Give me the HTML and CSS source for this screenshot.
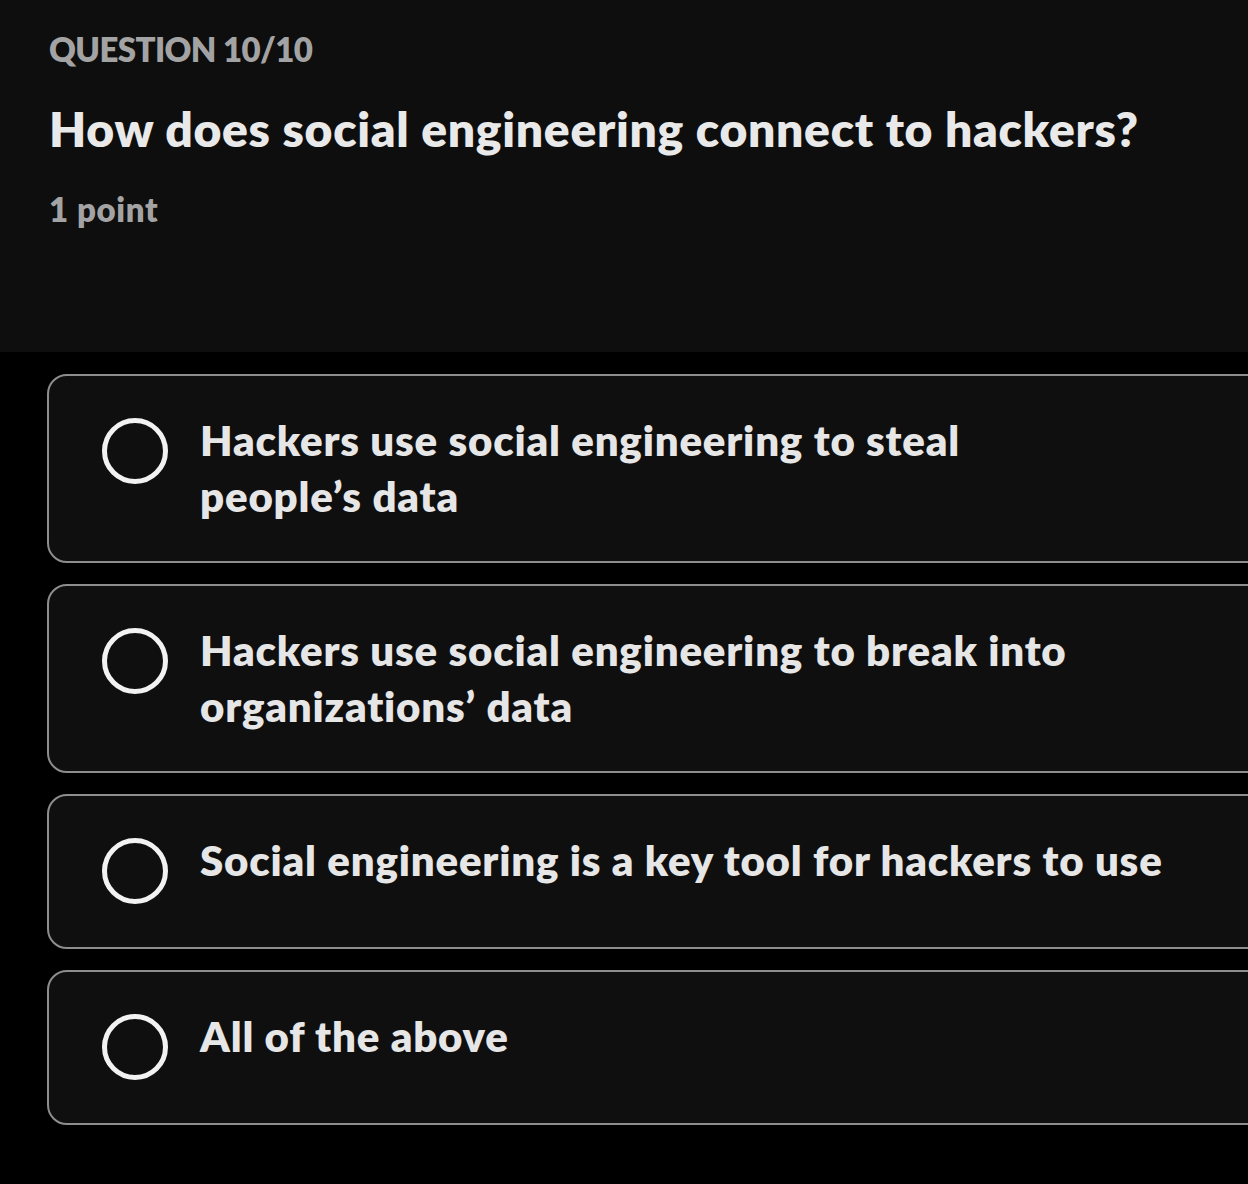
FILE: index.html
```html
<!DOCTYPE html>
<html lang="en">
<head>
<meta charset="utf-8">
<title>Question 10/10</title>
<link rel="stylesheet" href="styles.css">
</head>
<body>
<header class="question-head">
  <div class="q-label">QUESTION 10/10</div>
  <h1 class="q-title">How does social engineering connect to hackers?</h1>
  <div class="q-points">1 point</div>
</header>
<main class="options">
  <div class="option">
    <span class="radio"></span>
    <span class="option-text">Hackers use social engineering to steal<br>people’s data</span>
  </div>
  <div class="option">
    <span class="radio"></span>
    <span class="option-text">Hackers use social engineering to break into<br>organizations’ data</span>
  </div>
  <div class="option">
    <span class="radio"></span>
    <span class="option-text">Social engineering is a key tool for hackers to use</span>
  </div>
  <div class="option">
    <span class="radio"></span>
    <span class="option-text">All of the above</span>
  </div>
</main>
</body>
</html>
```

FILE: styles.css
```css
html, body {
  margin: 0;
  padding: 0;
  background: #000;
  overflow: hidden;
}
body {
  font-family: Lato, "Noto Sans", sans-serif;
  font-weight: 800;
  font-variant-ligatures: none;
  color: #e6e6e6;
}
.question-head {
  background: #0e0e0e;
  height: 352px;
  box-sizing: border-box;
  padding: 29px 0 0 49px;
}
.q-label {
  font-size: 33px;
  line-height: 40px;
  letter-spacing: -0.6px;
  color: #a3a3a3;
}
.q-title {
  margin: 32px 0 0 0;
  font-size: 48px;
  line-height: 56px;
  letter-spacing: 0.7px;
  font-weight: 800;
  color: #e9e9e9;
}
.q-points {
  margin-top: 34px;
  font-size: 33px;
  line-height: 36px;
  letter-spacing: 0.6px;
  color: #a3a3a3;
}
.options {
  display: flex;
  flex-direction: column;
  gap: 21px;
  padding: 22px 0 0 47px;
}
.option {
  display: flex;
  align-items: flex-start;
  gap: 32px;
  margin-right: -40px;
  padding: 36px 0 37px 53px;
  background: #0f0f0f;
  border: 2px solid #8d8d8d;
  border-radius: 20px;
}
.radio {
  flex: none;
  width: 66px;
  height: 66px;
  margin: 6px 0 6px;
  box-sizing: border-box;
  border: 5px solid #f2f2f2;
  border-radius: 50%;
}
.option-text {
  font-size: 42px;
  line-height: 56px;
  letter-spacing: 0.8px;
  color: #e6e6e6;
}
```
